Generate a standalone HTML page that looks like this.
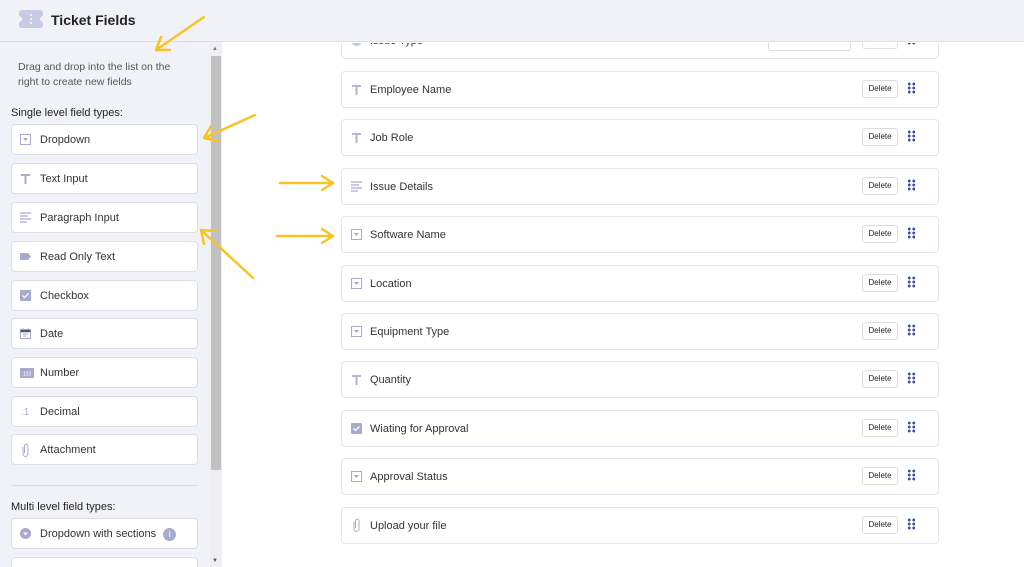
<!DOCTYPE html>
<html style="overflow:hidden;height:567px"><head><style>
*{box-sizing:border-box;margin:0;padding:0}
body{width:1024px;height:567px;overflow:hidden;background:#fff;font-family:"Liberation Sans",sans-serif;position:relative;color:#333}
.hdr{position:absolute;left:0;top:0;width:1024px;height:42px;background:#f1f2f7;border-bottom:1px solid #dcdde6}
.hdr .t{position:absolute;left:51px;top:12px;font-size:14px;font-weight:bold;color:#222}
.side{position:absolute;left:0;top:42px;width:210px;height:525px;background:#f1f2f7}
.sb{position:absolute;left:210px;top:42px;width:12px;height:525px;background:#efeff2}
.thumb{position:absolute;left:211px;top:56px;width:10px;height:414px;background:#c1c1c1}
.item{position:absolute;left:11px;width:187px;height:31px;background:#fff;border:1px solid #dcdde9;border-radius:4px;font-size:11px;color:#333;padding-left:28px;padding-top:1px;line-height:29px}
.item .ic{position:absolute;left:8px;top:9px;width:11px;height:11px}
.lbl{position:absolute;left:11px;font-size:11px;color:#222}
.card{position:absolute;left:341px;width:598px;height:37px;background:#fff;border:1px solid #e3e4ee;border-radius:4px;font-size:11px;color:#333;line-height:35px;padding-left:28px;padding-top:1px}
.card .ic{position:absolute;left:9px;top:12px;width:11px;height:11px}
.del{position:absolute;left:520px;top:8px;width:36px;height:18px;border:1px solid #ddd;border-radius:3px;font-size:8px;line-height:16px;text-align:center;color:#222}
.dots{position:absolute;left:565px;top:10px;width:9px;height:12px;background:radial-gradient(circle,#3f4aa8 1.3px,transparent 1.6px) 0 0/4.5px 4px}
</style></head><body>
<div class="hdr">
<svg style="position:absolute;left:19px;top:10px" width="24" height="18"><rect x="0" y="0" width="24" height="18" rx="3" fill="#c7cae3"/><circle cx="0" cy="9" r="3" fill="#f1f2f7"/><circle cx="24" cy="9" r="3" fill="#f1f2f7"/><circle cx="12" cy="5" r="1" fill="#fff"/><circle cx="12" cy="9" r="1" fill="#fff"/><circle cx="12" cy="13" r="1" fill="#fff"/></svg>
<div class="t">Ticket Fields</div></div>
<div class="side"></div>
<div class="sb"></div><div class="thumb"></div>
<div style="position:absolute;left:212px;top:46px;font-size:6px;color:#777">▲</div>
<div style="position:absolute;left:212px;top:558px;font-size:6px;color:#555">▼</div>
<div style="position:absolute;left:18px;top:60px;font-size:10.5px;line-height:15px;color:#555;width:170px">Drag and drop into the list on the right to create new fields</div>
<div class="lbl" style="top:107px">Single level field types:</div>
<div class="item" style="top:124px"><svg class="ic"><rect x=".5" y=".5" width="10" height="10" fill="none" stroke="#a7abd0"/><path d="M3 4h5l-2.5 3z" fill="#a7abd0"/></svg>Dropdown</div>
<div class="item" style="top:163px"><svg class="ic"><path d="M1 1h9v2H6.5v8h-2V3H1z" fill="#a7abd0"/></svg>Text Input</div>
<div class="item" style="top:202px"><svg class="ic"><path d="M0 1h11M0 4h8M0 7h11M0 10h7" stroke="#a7abd0" stroke-width="1.3"/></svg>Paragraph Input</div>
<div class="item" style="top:241px"><svg class="ic"><path d="M0 2h8l3 3.5-3 3.5H0z" fill="#a7abd0"/></svg>Read Only Text</div>
<div class="item" style="top:280px"><svg class="ic"><rect width="11" height="11" rx="1" fill="#a7abd0"/><path d="M2.5 5.5l2 2 4-4" stroke="#fff" fill="none" stroke-width="1.3"/></svg>Checkbox</div>
<div class="item" style="top:318px"><svg class="ic"><rect x=".5" y="1.5" width="10" height="9" fill="none" stroke="#a7abd0"/><path d="M0 2h11v2H0zM3 0v2M8 0v2M3 6h5M3 8h3" stroke="#a7abd0"/></svg>Date</div>
<div class="item" style="top:357px"><svg class="ic" style="width:14px"><rect width="14" height="10" y="1" fill="#a7abd0"/><text x="7" y="8.5" font-size="5" fill="#fff" text-anchor="middle" font-family="Liberation Sans">123</text></svg>Number</div>
<div class="item" style="top:396px"><span style="position:absolute;left:9px;color:#a7abd0;font-size:10px">.1</span>Decimal</div>
<div class="item" style="top:434px"><svg class="ic" style="height:14px;top:8px"><path d="M3 4v7a2.5 2.5 0 005 0V3a1.7 1.7 0 00-3.5 0v7" fill="none" stroke="#a7abd0"/></svg>Attachment</div>
<div style="position:absolute;left:11px;top:485px;width:187px;height:1px;background:#dcdde6"></div>
<div class="lbl" style="top:501px">Multi level field types:</div>
<div class="item" style="top:518px"><svg class="ic"><circle cx="5.5" cy="5.5" r="5.5" fill="#a7abd0"/><path d="M3 4.5h5l-2.5 3z" fill="#fff"/></svg>Dropdown with sections <span style="display:inline-block;width:13px;height:13px;border-radius:50%;background:#a7abd0;color:#fff;font-size:9px;line-height:13px;text-align:center;vertical-align:middle;margin-left:4px">i</span></div>
<div class="item" style="top:557px;height:10px;border-bottom:none;border-radius:4px 4px 0 0"></div>

<div style="position:absolute;left:222px;top:43px;width:802px;height:524px;overflow:hidden">
<div style="position:relative;left:-222px;top:-43px">
<div class="card" style="top:22px"><svg class="ic"><circle cx="5.5" cy="5.5" r="5.5" fill="#c5c8e0"/></svg>Issue Type<div style="position:absolute;left:426px;top:10px;width:83px;height:18px;border:1px solid #ddd;border-radius:3px"></div><div class="del">Delete</div><div class="dots"></div></div>
</div></div>
<div class="card" style="top:71px"><svg class="ic"><path d="M1 1h9v2H6.5v8h-2V3H1z" fill="#b3b6d6"/></svg>Employee Name<div class="del">Delete</div><div class="dots"></div></div>
<div class="card" style="top:119px"><svg class="ic"><path d="M1 1h9v2H6.5v8h-2V3H1z" fill="#b3b6d6"/></svg>Job Role<div class="del">Delete</div><div class="dots"></div></div>
<div class="card" style="top:168px"><svg class="ic"><path d="M0 1h11M0 4h8M0 7h11M0 10h7" stroke="#a7abd0" stroke-width="1.3"/></svg>Issue Details<div class="del">Delete</div><div class="dots"></div></div>
<div class="card" style="top:216px"><svg class="ic"><rect x=".5" y=".5" width="10" height="10" fill="none" stroke="#a7abd0"/><path d="M3 4h5l-2.5 3z" fill="#a7abd0"/></svg>Software Name<div class="del">Delete</div><div class="dots"></div></div>
<div class="card" style="top:265px"><svg class="ic"><rect x=".5" y=".5" width="10" height="10" fill="none" stroke="#a7abd0"/><path d="M3 4h5l-2.5 3z" fill="#a7abd0"/></svg>Location<div class="del">Delete</div><div class="dots"></div></div>
<div class="card" style="top:313px"><svg class="ic"><rect x=".5" y=".5" width="10" height="10" fill="none" stroke="#a7abd0"/><path d="M3 4h5l-2.5 3z" fill="#a7abd0"/></svg>Equipment Type<div class="del">Delete</div><div class="dots"></div></div>
<div class="card" style="top:361px"><svg class="ic"><path d="M1 1h9v2H6.5v8h-2V3H1z" fill="#b3b6d6"/></svg>Quantity<div class="del">Delete</div><div class="dots"></div></div>
<div class="card" style="top:410px"><svg class="ic"><rect width="11" height="11" rx="1" fill="#a7abd0"/><path d="M2.5 5.5l2 2 4-4" stroke="#fff" fill="none" stroke-width="1.3"/></svg>Wiating for Approval<div class="del">Delete</div><div class="dots"></div></div>
<div class="card" style="top:458px"><svg class="ic"><rect x=".5" y=".5" width="10" height="10" fill="none" stroke="#a7abd0"/><path d="M3 4h5l-2.5 3z" fill="#a7abd0"/></svg>Approval Status<div class="del">Delete</div><div class="dots"></div></div>
<div class="card" style="top:507px"><svg class="ic" style="height:14px;top:10px"><path d="M3 4v7a2.5 2.5 0 005 0V3a1.7 1.7 0 00-3.5 0v7" fill="none" stroke="#a7abd0"/></svg>Upload your file<div class="del">Delete</div><div class="dots"></div></div>

<svg style="position:absolute;left:0;top:0" width="1024" height="567" fill="none" stroke="#f7c325" stroke-width="2.5" stroke-linecap="round">
<path d="M204 17L156 50M156 50l14 0M156 50l5-13"/>
<path d="M255 115L204 138M204 138l14 3M204 138l7-12"/>
<path d="M253 278L201 230M201 230l3 14M201 230l14 1"/>
<path d="M280 183L333 183M333 183l-11-7M333 183l-11 7"/>
<path d="M277 236L333 236M333 236l-11-7M333 236l-11 7"/>
</svg>
</body></html>
